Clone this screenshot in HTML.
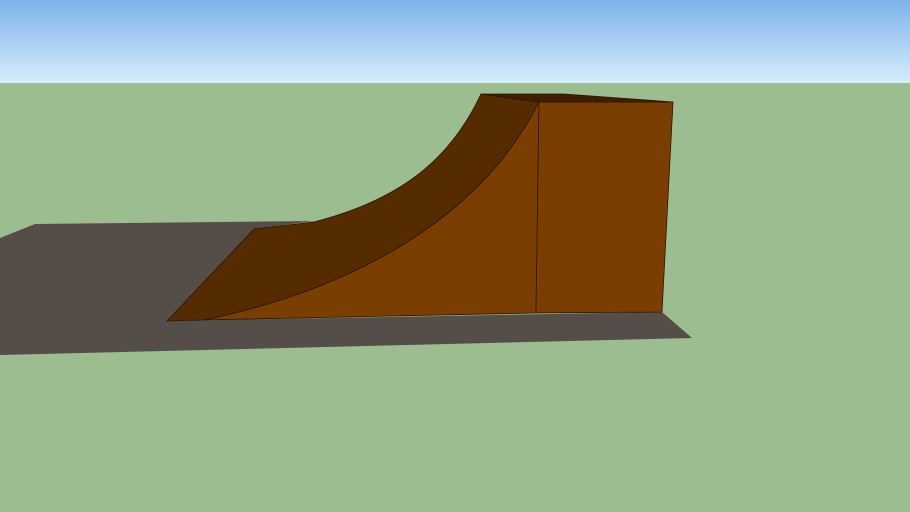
<!DOCTYPE html>
<html><head><meta charset="utf-8"><style>
html,body{margin:0;padding:0;width:910px;height:512px;overflow:hidden;background:#9bbd8f}
svg{display:block}
</style></head><body>
<svg width="910" height="512" viewBox="0 0 910 512" xmlns="http://www.w3.org/2000/svg">
<defs><linearGradient id="sky" x1="0" y1="0" x2="0" y2="1">
<stop offset="0" stop-color="#7eb2ea"/><stop offset="1" stop-color="#d6edfb"/></linearGradient></defs>
<rect x="0" y="0" width="910" height="83" fill="url(#sky)"/>
<rect x="0" y="83" width="910" height="429" fill="#9bbd8f"/>
<polygon points="35,224 314,221 254,229 167,321 662,312 692,338 0,355 0,238" fill="#554e48"/>
<path d="M167,321 L254,229 L314,222 C400,200 450,160 481,94 L539,102 C480,220 350,290 204,320 Z" fill="#552b00" stroke="#2a1500" stroke-width="0.8"/>
<path d="M204,320 C350,290 480,220 539,102 L536,313 Z" fill="#7a3e00" stroke="#2a1500" stroke-width="0.8"/>
<polygon points="539,102 673,102 662,312 536,313" fill="#7a3f00" stroke="#2a1500" stroke-width="0.8"/>
<polygon points="481,94 564,94 673,102 539,102" fill="#3f1f00" stroke="#2a1500" stroke-width="0.8"/>
</svg>
</body></html>
